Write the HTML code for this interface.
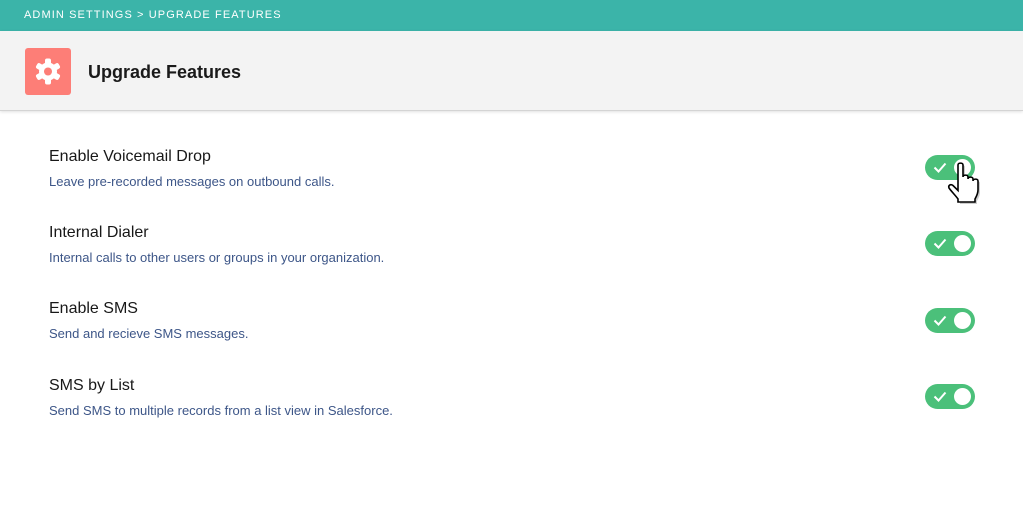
<!DOCTYPE html>
<html><head><style>
body{margin:0;width:1023px;height:523px;background:#fff;font-family:"Liberation Sans",sans-serif;position:relative;overflow:hidden}
.top{position:absolute;left:0;top:0;width:1023px;height:31px;background:#3bb4a9;color:#fff;font-size:11px;letter-spacing:1.1px;line-height:31px;padding-left:24px;box-sizing:border-box}
.panel{position:absolute;left:0;top:31px;width:1023px;height:79px;background:#f3f3f3;border-bottom:1px solid #d4d4d4;box-shadow:0 1px 3px rgba(0,0,0,.12)}
.icon{position:absolute;left:25px;top:17px;width:46px;height:47px;background:#fd7e77;border-radius:3px}
.title{position:absolute;left:88px;top:31px;font-size:18px;font-weight:bold;color:#1a1a1a}
.row{position:absolute;left:49px}
.row h{display:block;font-size:16px;color:#181818}
.row p{margin:8px 0 0;font-size:13px;color:#3d5688}
.tg{position:absolute;left:925px;width:50px;height:25px;border-radius:13px;background:#4bc07a}
.tg:after{content:"";position:absolute;right:4px;top:4px;width:17px;height:17px;border-radius:50%;background:#fff}
.tg svg{position:absolute;left:8px;top:7px}
</style></head><body>
<div class="top">ADMIN SETTINGS &gt; UPGRADE FEATURES</div>
<div class="panel"><div class="icon"><svg width="46" height="47" viewBox="0 0 46 47"><g fill="#fff" transform="translate(23,23.5)"><circle r="9"/><g><rect x="-3" y="-13" width="6" height="26" rx="2"/><rect x="-3" y="-13" width="6" height="26" rx="2" transform="rotate(60)"/><rect x="-3" y="-13" width="6" height="26" rx="2" transform="rotate(120)"/></g><circle r="4" fill="#fd7e77"/></g></svg></div><div class="title">Upgrade Features</div></div>

<div class="row" style="top:148px"><h>Enable Voicemail Drop</h><p>Leave pre-recorded messages on outbound calls.</p></div>
<div class="row" style="top:224px"><h>Internal Dialer</h><p>Internal calls to other users or groups in your organization.</p></div>
<div class="row" style="top:300px"><h>Enable SMS</h><p>Send and recieve SMS messages.</p></div>
<div class="row" style="top:377px"><h>SMS by List</h><p>Send SMS to multiple records from a list view in Salesforce.</p></div>

<div class="tg" style="top:155px"><svg width="14" height="11"><path d="M1.5 5.5l4 4 7-8" stroke="#fff" stroke-width="2" fill="none"/></svg></div>
<div class="tg" style="top:231px"><svg width="14" height="11"><path d="M1.5 5.5l4 4 7-8" stroke="#fff" stroke-width="2" fill="none"/></svg></div>
<div class="tg" style="top:308px"><svg width="14" height="11"><path d="M1.5 5.5l4 4 7-8" stroke="#fff" stroke-width="2" fill="none"/></svg></div>
<div class="tg" style="top:384px"><svg width="14" height="11"><path d="M1.5 5.5l4 4 7-8" stroke="#fff" stroke-width="2" fill="none"/></svg></div>

<svg style="position:absolute;left:946px;top:162px" width="40" height="46" viewBox="0 0 40 46">
<path d="M12 3c0-2.5 5-2.5 5 0v12c0-2.5 5-2.5 5 0v2c0-2.5 5-2.5 5 0v2c0-2.5 5-2.5 5 0v9c0 4-2 7-3 9v3H12v-3c-2-3-7-8-9-11-1-2.5 1.5-4.5 4-2.5l5 5z" fill="#999" opacity=".5" transform="translate(2,2)"/>
<path d="M12 3c0-2.5 5-2.5 5 0v12c0-2.5 5-2.5 5 0v2c0-2.5 5-2.5 5 0v2c0-2.5 5-2.5 5 0v9c0 4-2 7-3 9v3H12v-3c-2-3-7-8-9-11-1-2.5 1.5-4.5 4-2.5l5 5z" fill="#fff" stroke="#000" stroke-width="1.6"/>
</svg>
</body></html>
